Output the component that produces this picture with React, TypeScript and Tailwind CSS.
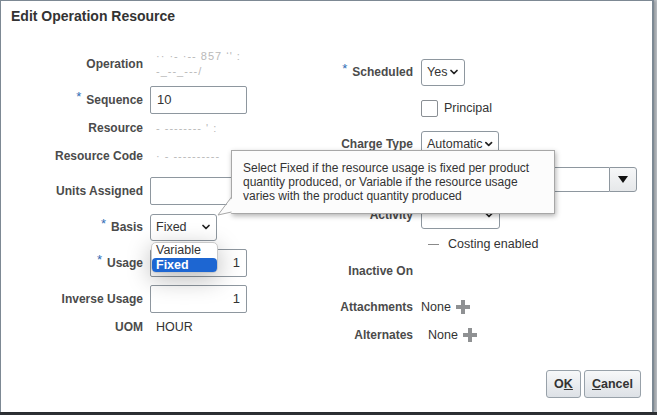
import { ChevronDown } from "lucide-react";

const font = { fontFamily: '"Liberation Sans", Arial, sans-serif' };

const Req = () => (
  <span className="text-[#2f6db5] font-normal text-[13px] relative -top-[3px] mr-[5px]">*</span>
);

const Label = ({ children, req }: { children: React.ReactNode; req?: boolean }) => (
  <div className="text-right text-[12px] font-bold text-[#4b4b4b] whitespace-nowrap">
    {req && <Req />}
    {children}
  </div>
);

const Select = ({ value, width }: { value: string; width: string }) => (
  <div
    className={`${width} h-[27px] border border-[#8e979f] rounded-[3px] bg-white flex items-center justify-between pl-[5px] pr-[4px] text-[12.5px] text-[#333]`}
  >
    <span>{value}</span>
    <ChevronDown size={12} strokeWidth={3.5} className="text-[#222]" />
  </div>
);

const Input = ({ value, right }: { value?: string; right?: boolean }) => (
  <div
    className={`w-[97px] h-[28px] border border-[#8e979f] rounded-[2px] bg-white flex items-center px-[6px] text-[13px] text-[#333] ${
      right ? "justify-end" : ""
    }`}
  >
    {value}
  </div>
);

const Plus = () => (
  <svg width="14" height="14" viewBox="0 0 14 14" className="ml-[5px]">
    <rect x="5" y="0" width="4" height="14" fill="#8f9193" />
    <rect x="0" y="5" width="14" height="4" fill="#8f9193" />
  </svg>
);

const Smudge = ({ text }: { text: string }) => (
  <span className="text-[11px] text-[#b9b9b9] tracking-[1px] whitespace-nowrap">{text}</span>
);

export default function App() {
  return (
    <div className="w-[657px] h-[415px] flex flex-col bg-[#2e3135]" style={font}>
      <div className="flex h-[412px]">
        <div className="relative w-[654px] h-[412px] bg-white border-l border-t border-r-2 border-[#7d8994] shadow-[2px_0_3px_rgba(0,0,0,0.25)] flex flex-col">
          <div className="h-[31px] flex items-center pl-[10px] text-[14px] font-bold text-[#333]">
            Edit Operation Resource
          </div>

          <div className="flex flex-1">
            {/* left column */}
            <div className="w-[259px] pt-[14px] grid grid-cols-[142px_1fr] gap-x-[7px] content-start items-center">
              <Label>Operation</Label>
              <div className="h-[36px] flex flex-col justify-center leading-[15px] pl-[6px]">
                <Smudge text="·· ·‑ ·‑‑ 857 ‘' :" />
                <Smudge text="‑_‑‑_‑‑‑/" />
              </div>

              <Label req>Sequence</Label>
              <div className="h-[36px] flex items-center">
                <Input value="10" />
              </div>

              <Label>Resource</Label>
              <div className="h-[20px] flex items-center pl-[6px]">
                <Smudge text="‑ ‑‑‑‑‑‑‑‑       ' :" />
              </div>

              <Label>Resource Code</Label>
              <div className="h-[36px] flex items-center pl-[6px]">
                <Smudge text="·   ‑ ‑‑‑‑‑‑‑‑‑‑" />
              </div>

              <Label>Units Assigned</Label>
              <div className="h-[34px] flex items-center">
                <Input />
              </div>

              <Label req>Basis</Label>
              <div className="h-[38px] flex items-center">
                <Select value="Fixed" width="w-[67px]" />
              </div>

              <Label req>Usage</Label>
              <div className="h-[34px] flex items-center">
                <Input value="1" right />
              </div>

              <Label>Inverse Usage</Label>
              <div className="h-[38px] flex items-center">
                <Input value="1" right />
              </div>

              <Label>UOM</Label>
              <div className="h-[18px] flex items-center pl-[6px] text-[12.5px] text-[#333]">HOUR</div>
            </div>

            {/* right column */}
            <div className="flex-1 pt-[22px] grid grid-cols-[153px_1fr] gap-x-[8px] content-start items-center">
              <Label req>Scheduled</Label>
              <div className="h-[36px] flex items-center">
                <Select value="Yes" width="w-[44px]" />
              </div>

              <div />
              <div className="h-[36px] flex items-center gap-[6px] text-[12.5px] text-[#333]">
                <div className="w-[17px] h-[17px] border border-[#8a8f94] rounded-[2px] bg-white" />
                Principal
              </div>

              <Label>Charge Type</Label>
              <div className="h-[36px] flex items-center">
                <Select value="Automatic" width="w-[78px]" />
              </div>

              {/* label of this row is hidden under the tooltip */}
              <div />
              <div className="h-[34px] flex items-center">
                <div className="w-[188px] h-[25px] border border-[#8e979f] border-r-0 rounded-l-[3px] bg-white" />
                <div className="w-[28px] h-[25px] border border-[#8e979f] rounded-r-[3px] bg-gradient-to-b from-[#f6f7f8] to-[#e6e8ea] flex items-center justify-center">
                  <svg width="10" height="7" viewBox="0 0 10 7">
                    <polygon points="0,0 10,0 5,7" fill="#111" />
                  </svg>
                </div>
              </div>

              <Label>Activity</Label>
              <div className="h-[38px] flex items-center">
                <Select value="" width="w-[79px]" />
              </div>

              <div />
              <div className="h-[20px] flex items-center text-[12.5px] text-[#333]">
                <span className="w-[11px] h-px bg-[#8a8a8a] ml-[7px] mr-[9px]" />
                Costing enabled
              </div>

              <Label>Inactive On</Label>
              <div className="h-[34px]" />

              <Label>Attachments</Label>
              <div className="h-[38px] flex items-center text-[12.5px] text-[#333]">
                None
                <Plus />
              </div>

              <Label>Alternates</Label>
              <div className="h-[18px] flex items-center pl-[7px] text-[12.5px] text-[#333]">
                None
                <Plus />
              </div>
            </div>
          </div>

          <div className="flex justify-end gap-[3px] pr-[11px] pb-[14px]">
            <button className="w-[35px] h-[28px] border border-[#98a1a9] rounded-[3px] bg-gradient-to-b from-[#f7f8f9] to-[#dde1e6] text-[12.5px] font-bold text-[#333]">
              O<span className="underline">K</span>
            </button>
            <button className="w-[57px] h-[28px] border border-[#98a1a9] rounded-[3px] bg-gradient-to-b from-[#f7f8f9] to-[#dde1e6] text-[12.5px] font-bold text-[#333]">
              <span className="underline">C</span>ancel
            </button>
          </div>

          {/* basis dropdown list */}
          <div className="absolute left-[150px] top-[241px] w-[67px] h-[31px] bg-white border border-[#c9c9c9] rounded-[5px] shadow-[0_6px_24px_rgba(0,0,0,0.28)] text-[12.5px] leading-[15px] overflow-hidden">
            <div className="pl-[4px] text-[#333]">Variable</div>
            <div className="pl-[4px] bg-[#1d66d2] text-white font-bold rounded-[4px]">Fixed</div>
          </div>

          {/* tooltip */}
          <div className="absolute left-[230px] top-[149px] w-[324px] h-[64px] bg-[#fcfcfc] border border-[#a7a7a7] shadow-[1px_2px_5px_rgba(0,0,0,0.3)] pl-[11px] pt-[10px] text-[12px] leading-[14px] text-[#333]">
            Select Fixed if the resource usage is fixed per product
            <br />
            quantity produced, or Variable if the resource usage
            <br />
            varies with the product quantity produced
          </div>
          <svg className="absolute left-[215px] top-[195px]" width="20" height="22" viewBox="0 0 20 22">
            <polygon points="17,1 17,17 2,19" fill="#fcfcfc" />
            <line x1="15.5" y1="1" x2="2" y2="19" stroke="#a7a7a7" strokeWidth="1" />
            <line x1="15.5" y1="16" x2="2" y2="19" stroke="#a7a7a7" strokeWidth="1" />
          </svg>
        </div>
        <div className="flex-1 bg-[#c7ccd1]" />
      </div>
      <div className="flex-1" />
    </div>
  );
}
